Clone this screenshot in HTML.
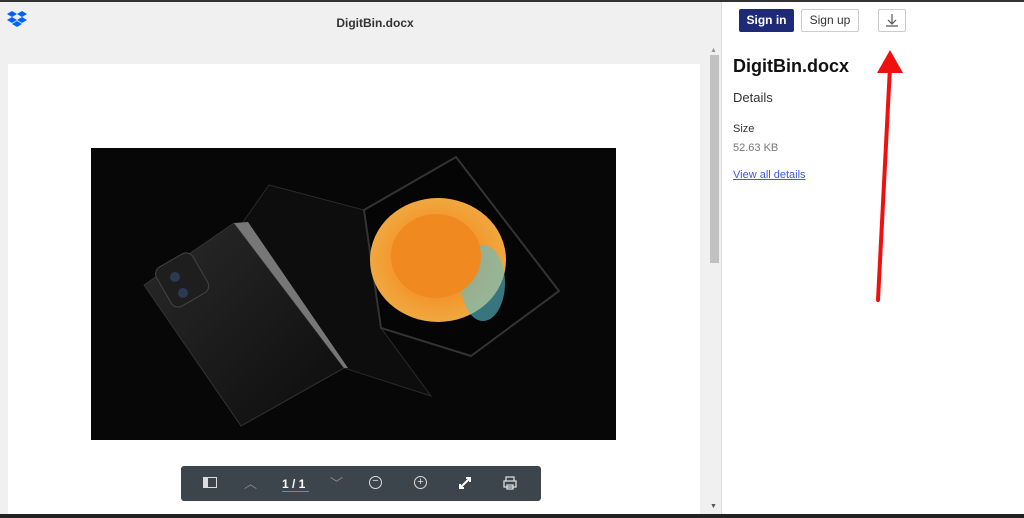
<!DOCTYPE html><html><head><style>
*{margin:0;padding:0;box-sizing:border-box}
body{width:1024px;height:518px;overflow:hidden;background:#fff;font-family:"Liberation Sans",sans-serif;position:relative}
.a{position:absolute}
</style></head><body>
<div class="a" style="left:0;top:0;width:1024px;height:2px;background:#333"></div>
<div class="a" style="left:0;top:2px;width:721px;height:512px;background:#f0f0f0"></div>
<div class="a" style="left:721px;top:2px;width:1px;height:512px;background:#ddd"></div>
<svg class="a" style="left:7px;top:11px" width="20" height="18" viewBox="0 0 20 18"><g fill="#0061fe"><path d="M5 0l5 3-5 3-5-3z"/><path d="M15 0l5 3-5 3-5-3z"/><path d="M5 6l5 3-5 3-5-3z"/><path d="M15 6l5 3-5 3-5-3z"/><path d="M10 10l5 3-5 3-5-3z"/></g></svg>
<div class="a" style="left:0;width:750px;top:16px;text-align:center;font-size:12px;font-weight:bold;color:#333">DigitBin.docx</div>
<div class="a" style="left:8px;top:64px;width:692px;height:450px;background:#fff"></div>
<div class="a" style="left:708px;top:46px;width:12px;height:468px;background:#f0f0f0"></div>
<div class="a" style="left:710px;top:55px;width:9px;height:208px;background:#c1c1c1"></div>
<div class="a" style="left:710px;top:47px;font-size:7px;color:#999">▲</div>
<div class="a" style="left:710px;top:503px;font-size:7px;color:#555">▼</div>
<svg class="a" style="left:91px;top:148px" width="525" height="292" viewBox="0 0 525 292">
<defs><radialGradient id="g" cx="0.5" cy="0.5" r="0.5"><stop offset="0" stop-color="#e8741c"/><stop offset="0.7" stop-color="#f29a30"/><stop offset="1" stop-color="#f0a840"/></radialGradient>
<linearGradient id="b" x1="0" y1="0" x2="1" y2="1"><stop offset="0" stop-color="#2a2a2a"/><stop offset="1" stop-color="#0c0c0c"/></linearGradient></defs>
<rect width="525" height="292" fill="#070707"/>
<polygon points="178,37 273,62 290,180 340,248 253,220 150,77" fill="#0d0d0d" stroke="#2a2a2a"/>
<polygon points="53,137 143,75 253,220 150,278" fill="url(#b)" stroke="#333"/>
<polygon points="143,75 157,74 257,220 253,220" fill="#777"/>
<polygon points="273,62 365,9 468,143 380,208 290,180" fill="#050505" stroke="#333" stroke-width="2"/>
<rect x="70" y="110" width="42" height="45" rx="8" fill="#1e1e1e" stroke="#444" transform="rotate(-30 90 132)"/>
<circle cx="84" cy="129" r="5" fill="#2a3a50"/><circle cx="92" cy="145" r="5" fill="#2a3a50"/>
<ellipse cx="347" cy="112" rx="68" ry="62" fill="url(#g)"/>
<ellipse cx="392" cy="135" rx="22" ry="38" fill="#5bc0d0" opacity=".6"/>
<ellipse cx="345" cy="108" rx="45" ry="42" fill="#f08a20"/>
</svg>
<div class="a" style="left:181px;top:466px;width:360px;height:35px;background:#3d454c;border-radius:3px"></div>
<div class="a" style="left:203px;top:477px;width:14px;height:11px;border:1.5px solid #ddd;border-left-width:5px"></div>
<div class="a" style="left:244px;top:473px;color:#888;font-size:13px">︿</div>
<div class="a" style="left:282px;top:477px;color:#fff;font-size:12px;font-weight:bold;border-bottom:1px solid #6a8ab0;width:27px">1 / 1</div>
<div class="a" style="left:330px;top:473px;color:#888;font-size:13px">﹀</div>
<div class="a" style="left:369px;top:476px;width:13px;height:13px;border:1.5px solid #ddd;border-radius:50%;color:#ddd;font-size:11px;line-height:9px;text-align:center">−</div>
<div class="a" style="left:414px;top:476px;width:13px;height:13px;border:1.5px solid #ddd;border-radius:50%;color:#ddd;font-size:11px;line-height:10px;text-align:center">+</div>
<svg class="a" style="left:459px;top:477px" width="12" height="12"><path d="M1 11L11 1M7 1h4v4M1 7v4h4" stroke="#fff" stroke-width="2" fill="none"/></svg>
<svg class="a" style="left:503px;top:476px" width="14" height="14"><path d="M3 5V1h8v4M1 5h12v6H1zM4 9h6v4H4z" stroke="#ddd" stroke-width="1.3" fill="none"/></svg>
<div class="a" style="left:0;top:514px;width:1024px;height:4px;background:#222"></div>
<div class="a" style="left:739px;top:9px;width:55px;height:23px;background:#1e2a78;border-radius:2px;color:#fff;font-size:12px;font-weight:bold;text-align:center;line-height:23px">Sign in</div>
<div class="a" style="left:801px;top:9px;width:58px;height:23px;border:1px solid #ccc;border-radius:2px;color:#333;font-size:12px;text-align:center;line-height:21px">Sign up</div>
<div class="a" style="left:878px;top:9px;width:28px;height:23px;border:1px solid #ccc;border-radius:2px"></div>
<svg class="a" style="left:885px;top:13px" width="14" height="14"><path d="M7 1v9M3 7l4 4 4-4M1 13h12" stroke="#555" stroke-width="1.2" fill="none"/></svg>
<div class="a" style="left:733px;top:56px;font-size:18px;font-weight:bold;color:#111">DigitBin.docx</div>
<div class="a" style="left:733px;top:90px;font-size:13px;color:#333">Details</div>
<div class="a" style="left:733px;top:123px;font-size:11px;color:#333">Size</div>
<div class="a" style="left:733px;top:142px;font-size:11px;color:#777">52.63 KB</div>
<div class="a" style="left:733px;top:169px;font-size:11px;color:#3c5bd6;text-decoration:underline">View all details</div>
<svg class="a" style="left:860px;top:45px" width="60" height="260"><path d="M18 255L30 22" stroke="#f01010" stroke-width="4" stroke-linecap="round"/><path d="M30 5L17 28L43 28Z" fill="#f01010"/></svg>
</body></html>
